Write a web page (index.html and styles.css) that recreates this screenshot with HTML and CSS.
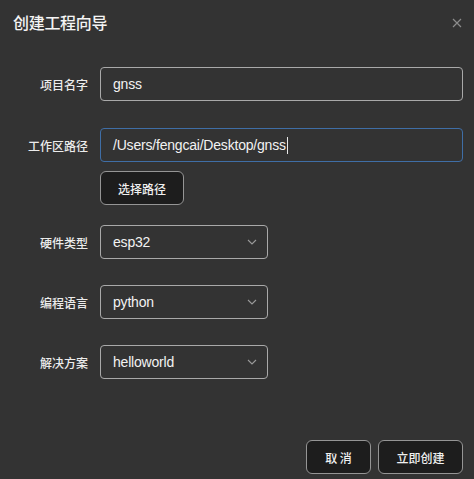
FILE: index.html
```html
<!DOCTYPE html>
<html lang="zh-CN">
<head>
<meta charset="utf-8">
<title>创建工程向导</title>
<link rel="stylesheet" href="styles.css">
</head>
<body>
<div class="dialog">
  <header class="head">
    <h1 class="title">创建工程向导</h1>
    <span class="close" aria-label="关闭">
      <svg width="10" height="10" viewBox="0 0 10 10"><path d="M1 1 L9 9 M9 1 L1 9" stroke="#8c8c8c" stroke-width="1.2" fill="none"/></svg>
    </span>
  </header>
  <div class="form">
    <div class="row row-name">
      <label class="label">项目名字</label>
      <div class="input">gnss</div>
    </div>
    <div class="row row-path">
      <label class="label">工作区路径</label>
      <div class="input focused">/Users/fengcai/Desktop/gnss<span class="caret"></span></div>
    </div>
    <div class="row row-btn">
      <span></span>
      <div><button class="btn btn-choose">选择路径</button></div>
    </div>
    <div class="row row-sel1">
      <label class="label">硬件类型</label>
      <div class="select">esp32<svg class="chev" width="10" height="6" viewBox="0 0 10 6"><path d="M1 1 L5 5 L9 1" stroke="#9a9a9a" stroke-width="1.1" fill="none"/></svg></div>
    </div>
    <div class="row row-sel">
      <label class="label">编程语言</label>
      <div class="select">python<svg class="chev" width="10" height="6" viewBox="0 0 10 6"><path d="M1 1 L5 5 L9 1" stroke="#9a9a9a" stroke-width="1.1" fill="none"/></svg></div>
    </div>
    <div class="row row-sel">
      <label class="label">解决方案</label>
      <div class="select">helloworld<svg class="chev" width="10" height="6" viewBox="0 0 10 6"><path d="M1 1 L5 5 L9 1" stroke="#9a9a9a" stroke-width="1.1" fill="none"/></svg></div>
    </div>
  </div>
  <footer class="foot">
    <button class="btn btn-cancel">取 消</button>
    <button class="btn btn-create">立即创建</button>
  </footer>
</div>
</body>
</html>
```
FILE: styles.css
```css
* { box-sizing: border-box; }
html, body {
  margin: 0;
  padding: 0;
  background: #333333;
}
body {
  font-family: "Liberation Sans", "Noto Sans CJK SC", sans-serif;
  color: #f2f2f2;
}
.dialog {
  height: 479px;
  display: flex;
  flex-direction: column;
  padding: 0 11px 5px 11px;
}
.head {
  height: 44px;
  display: flex;
  align-items: center;
  justify-content: space-between;
  padding-left: 2px;
}
.title {
  margin: 0;
  font-family: "Noto Sans CJK SC", sans-serif;
  font-size: 16px;
  font-weight: 500;
  color: #f4f4f4;
  letter-spacing: -0.3px;
}
.close {
  display: flex;
  width: 10px;
  height: 10px;
  margin-right: 1px;
  margin-top: 1px;
}
.form {
  display: flex;
  flex-direction: column;
}
.row {
  display: grid;
  grid-template-columns: 77px 1fr;
  column-gap: 12px;
  align-items: center;
}
.row-name { margin-top: 23px; }
.row-path { margin-top: 27px; }
.row-btn { margin-top: 9px; }
.row-sel1 { margin-top: 20px; }
.row-sel { margin-top: 26px; }
.label {
  text-align: right;
  font-family: "Noto Sans CJK SC", sans-serif;
  font-size: 12px;
  font-weight: 500;
  color: #ececec;
}
.input, .select {
  height: 34px;
  border: 1px solid #a9a9a9;
  border-radius: 4px;
  padding-left: 12px;
  display: flex;
  align-items: center;
  font-size: 14px;
  letter-spacing: -0.2px;
  color: #f2f2f2;
}
.input.focused {
  border-color: #3f6ea6;
}
.caret {
  display: inline-block;
  width: 1px;
  height: 17px;
  background: #e8e8e8;
  margin-left: 1px;
}
.select {
  width: 168px;
  justify-content: space-between;
  padding-right: 10px;
}
.chev { display: block; }
.btn {
  height: 34px;
  border: 1px solid #959595;
  border-radius: 6px;
  background: #1d1d1d;
  color: #f0f0f0;
  font-family: "Noto Sans CJK SC", sans-serif;
  font-size: 12px;
  font-weight: 500;
  padding: 0;
}
.btn-choose { width: 84px; }
.foot {
  margin-top: auto;
  display: flex;
  justify-content: flex-end;
  gap: 7px;
}
.btn-cancel { width: 65px; }
.btn-create { width: 85px; }
```
